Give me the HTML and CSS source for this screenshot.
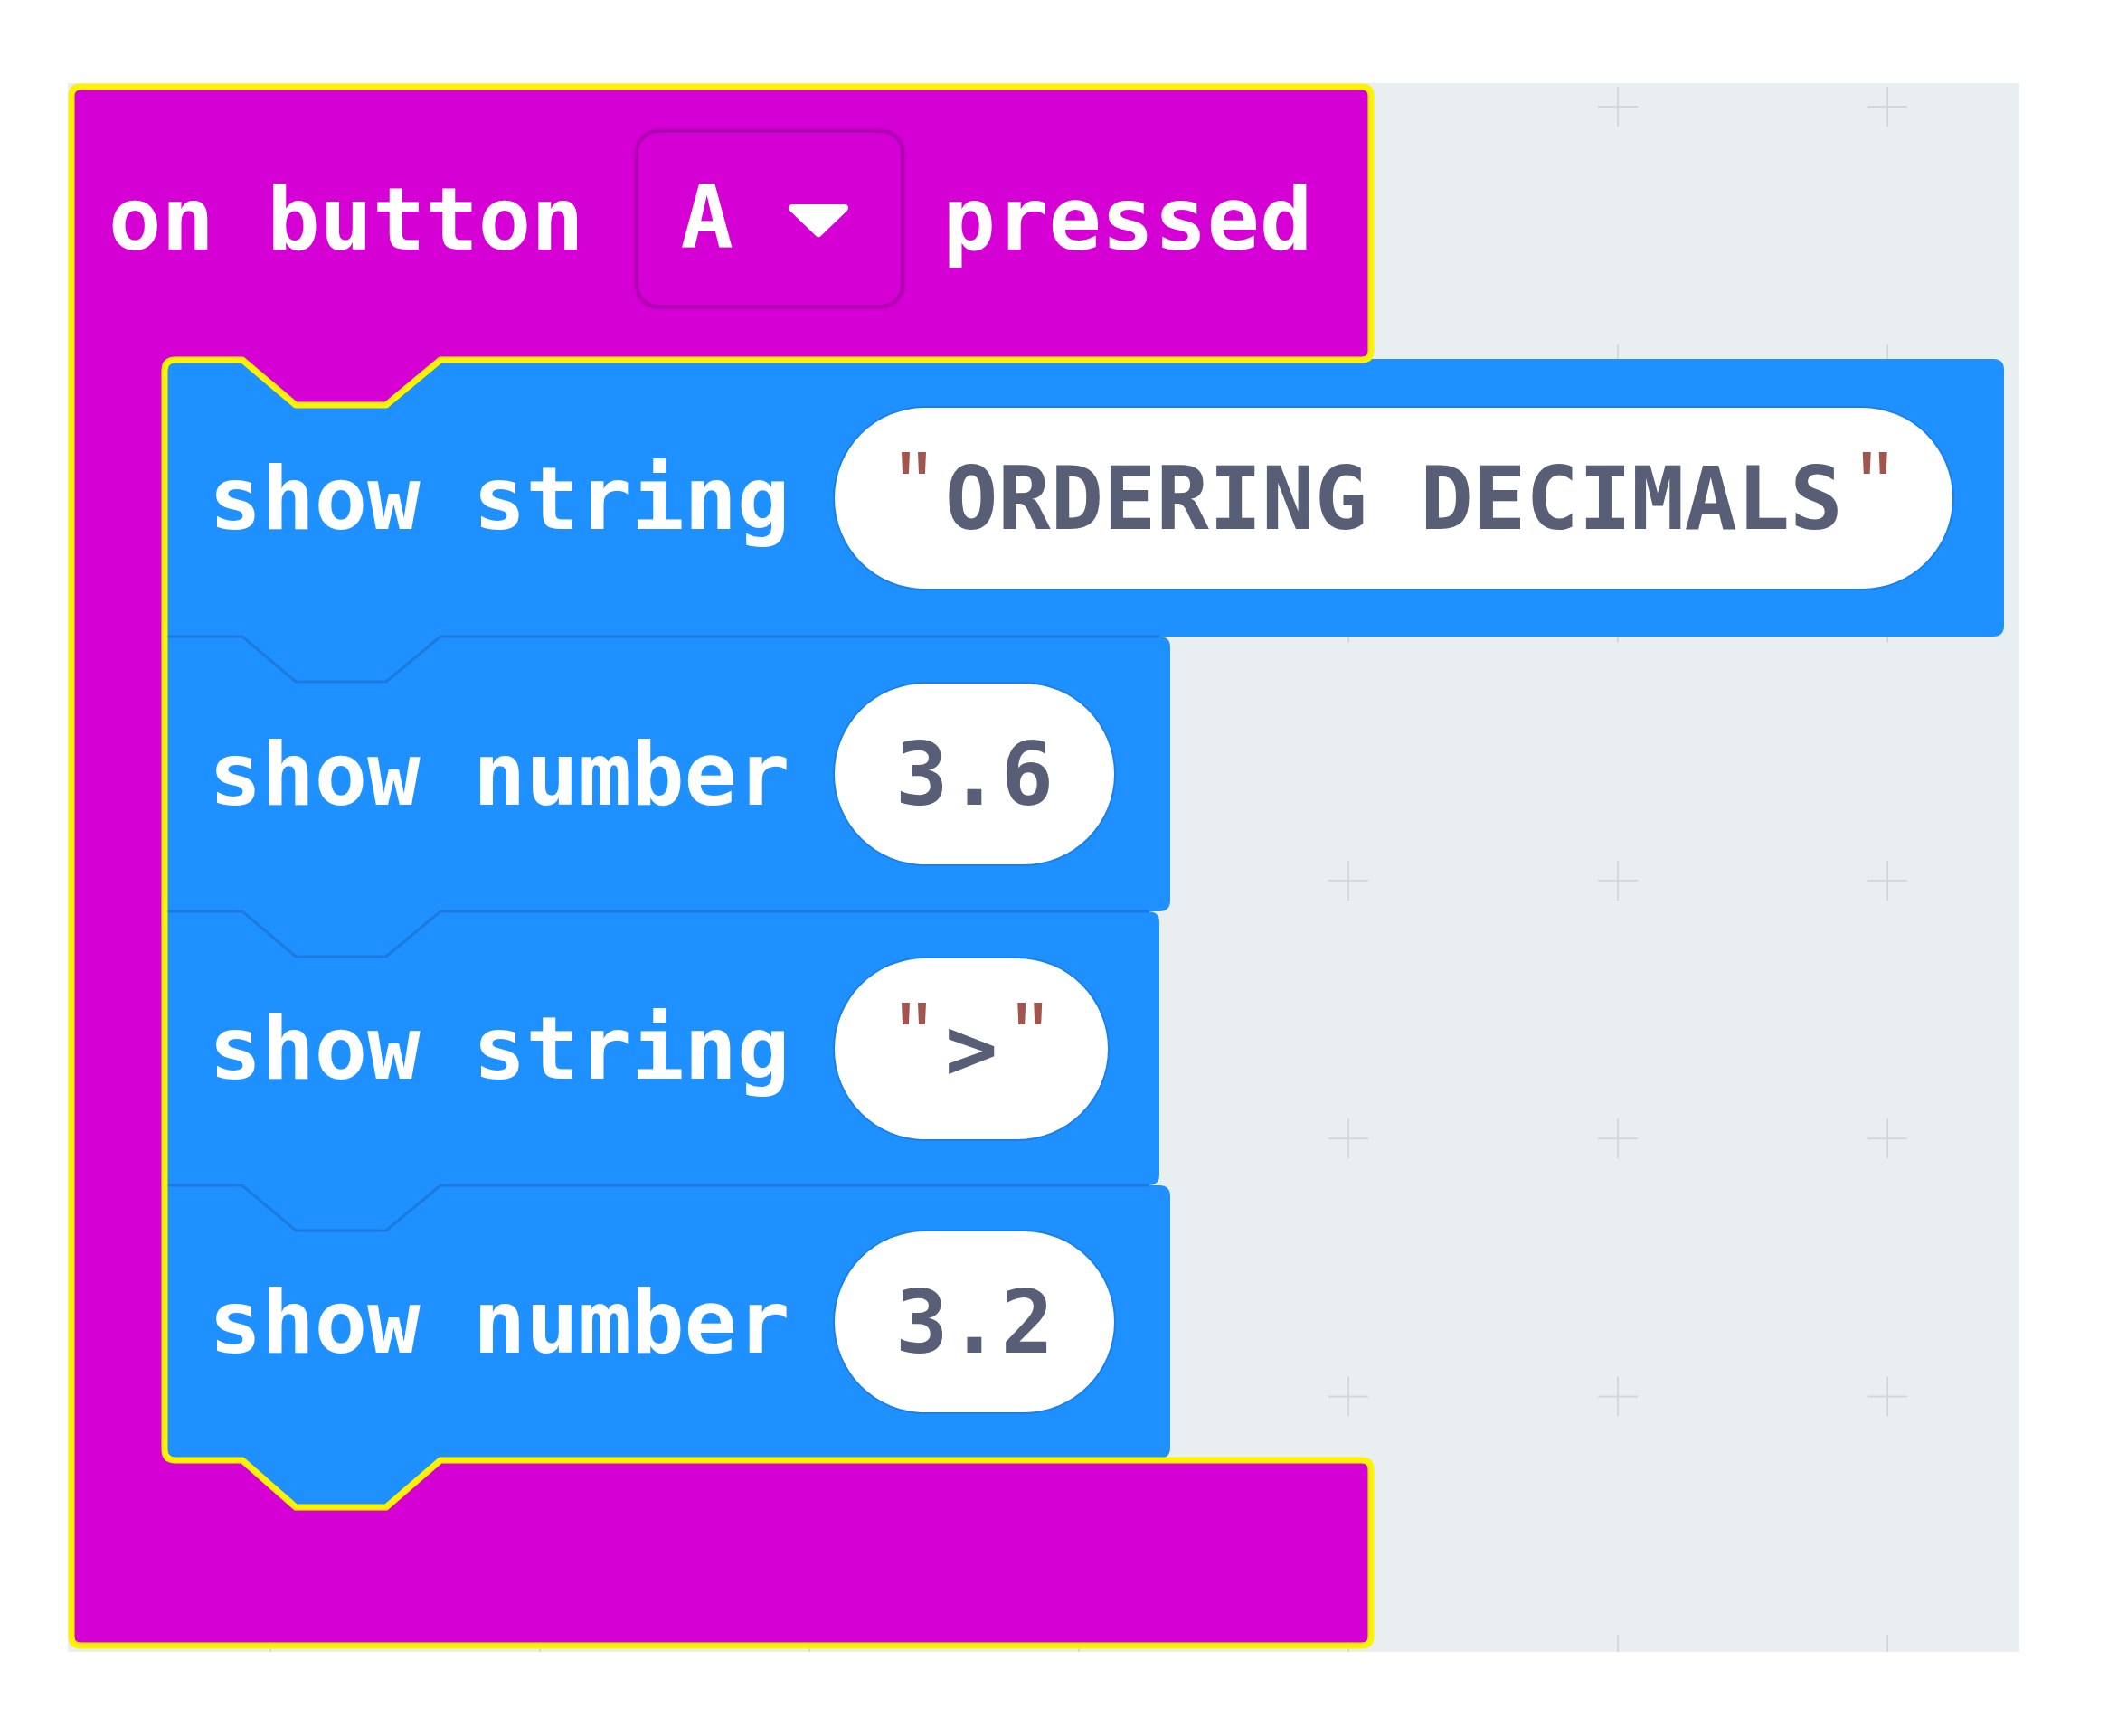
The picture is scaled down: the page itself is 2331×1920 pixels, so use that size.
FILE: index.html
```html
<!DOCTYPE html>
<html lang="en">
<head>
<meta charset="utf-8">
<title>on button A pressed</title>
<link rel="stylesheet" href="styles.css">
</head>
<body>
<main class="workspace">
  <svg class="grid" width="2158" height="1735" aria-hidden="true">
    <defs>
      <pattern id="plus" patternUnits="userSpaceOnUse" x="75" y="-116.65" width="298" height="285.3">
        <rect x="127" y="141.65" width="44" height="2" fill="#d3d8db"/>
        <rect x="148" y="120.65" width="2" height="44" fill="#d3d8db"/>
      </pattern>
    </defs>
    <rect width="2158" height="1735" fill="url(#plus)"/>
  </svg>

  <div class="stack">
    <svg class="shapes" width="2158" height="1735" aria-hidden="true">
      <g class="stmt-shape">
        <path d="M106,317 Q106,305 118,305 H2129 Q2141,305 2141,317 V600 Q2141,612 2129,612 H412 L352,662 H252 L193,612 H106 Z"/>
        <path d="M106,612 H1207 Q1219,612 1219,624 V904 Q1219,916 1207,916 H412 L352,966 H252 L193,916 H106 Z"/>
        <path d="M106,916 H1195 Q1207,916 1207,928 V1207 Q1207,1219 1195,1219 H412 L352,1269 H252 L193,1219 H106 Z"/>
        <path d="M106,1219 H1207 Q1219,1219 1219,1231 V1509 Q1219,1521 1207,1521 H412 L352,1573 H252 L193,1521 H106 Z"/>
      </g>
      <g class="seam">
        <path d="M106,612 H193 L252,662 H352 L412,612 H1207"/>
        <path d="M106,916 H193 L252,966 H352 L412,916 H1195"/>
        <path d="M106,1219 H193 L252,1269 H352 L412,1219 H1195"/>
      </g>
      <path class="hat-shape" d="M4,14 Q4,4 14,4 H1431 Q1441,4 1441,14 V296 Q1441,306 1431,306 H412 L352,356 H252 L193,306 H119 Q107,306 107,318 V1511 Q107,1523 119,1523 H193 L252,1575 H352 L412,1523 H1431 Q1441,1523 1441,1533 V1718 Q1441,1728 1431,1728 H14 Q4,1728 4,1718 Z"/>
    </svg>

    <div class="hat">
      <span class="label">on button</span>
      <div class="dropdown">
        <span class="label">A</span>
        <svg class="caret" viewBox="0 0 68 38" aria-hidden="true">
          <polygon points="5,5 63,5 34,33" fill="#fff" stroke="#fff" stroke-width="8" stroke-linejoin="round"/>
        </svg>
      </div>
      <span class="label pressed">pressed</span>
    </div>

    <div class="body">
      <div class="stmt stmt-1">
        <span class="label">show string</span>
        <div class="pill">
          <span class="q q-open">"</span>
          <span class="value">ORDERING DECIMALS</span>
          <span class="q q-close">"</span>
        </div>
      </div>
      <div class="stmt stmt-2">
        <span class="label">show number</span>
        <div class="pill">
          <span class="value">3.6</span>
        </div>
      </div>
      <div class="stmt stmt-3">
        <span class="label">show string</span>
        <div class="pill">
          <span class="q q-open">"</span>
          <span class="value">&gt;</span>
          <span class="q q-close">"</span>
        </div>
      </div>
      <div class="stmt stmt-4">
        <span class="label">show number</span>
        <div class="pill">
          <span class="value">3.2</span>
        </div>
      </div>
    </div>
  </div>
</main>
</body>
</html>
```

FILE: styles.css
```css
* {
  box-sizing: border-box;
}

html,
body {
  margin: 0;
  background: #ffffff;
}

body {
  font-family: "DejaVu Sans Mono", "Liberation Mono", monospace;
}

.workspace {
  position: relative;
  width: 2158px;
  height: 1735px;
  margin: 92px 0 0 75px;
  background: #e9eef0;
  overflow: hidden;
}

.grid {
  position: absolute;
  left: 0;
  top: 0;
}

.stack {
  position: relative;
  width: 2158px;
}

.shapes {
  position: absolute;
  left: 0;
  top: 0;
}

.stmt-shape path {
  fill: #1e90ff;
}

.seam path {
  fill: none;
  stroke: #1c7bdc;
  stroke-width: 3;
}

.hat-shape {
  fill: #d400d4;
  stroke: #fff200;
  stroke-width: 7;
  stroke-linejoin: round;
}

.hat {
  position: relative;
  display: flex;
  align-items: center;
  height: 306px;
  padding: 0 0 6px 45px;
}

.label {
  font-size: 97px;
  line-height: 97px;
  font-weight: bold;
  color: #ffffff;
  white-space: pre;
}

.dropdown {
  display: flex;
  align-items: center;
  width: 298px;
  height: 198px;
  margin-left: 56px;
  padding: 0 0 6px 47px;
  border: 4px solid #b100b3;
  border-radius: 26px;
  box-shadow: 0 0 3px rgba(120, 0, 120, 0.35);
}

.caret {
  width: 68px;
  height: 38px;
  margin-left: 60px;
  margin-top: 10px;
  flex: none;
}

.pressed {
  margin-left: 43px;
}

.body {
  position: relative;
  padding-left: 107px;
}

.stmt {
  display: flex;
  align-items: center;
  padding-left: 49px;
}

.stmt-1 {
  height: 306px;
}

.stmt-2 {
  height: 304px;
}

.stmt-3 {
  height: 303px;
}

.stmt-4 {
  height: 302px;
}

.pill {
  display: flex;
  align-items: center;
  height: 200px;
  margin-left: 50px;
  padding: 0 66.5px;
  background: #ffffff;
  border-radius: 100px;
  box-shadow: 0 0 0 2px #1a80e6;
}

.value {
  font-size: 97px;
  line-height: 97px;
  font-weight: bold;
  color: #575e75;
  white-space: pre;
}

.q {
  display: flex;
  justify-content: center;
  align-self: flex-start;
  width: 55px;
  margin-top: 31px;
  font-family: "Liberation Sans", sans-serif;
  font-size: 100px;
  line-height: 100px;
  font-weight: normal;
  color: #a0564e;
  transform-origin: top;
}

.q-open {
  transform: translateX(-7px) scaleY(1.12);
}

.q-close {
  transform: translateX(8px) scaleY(1.12);
}
```
